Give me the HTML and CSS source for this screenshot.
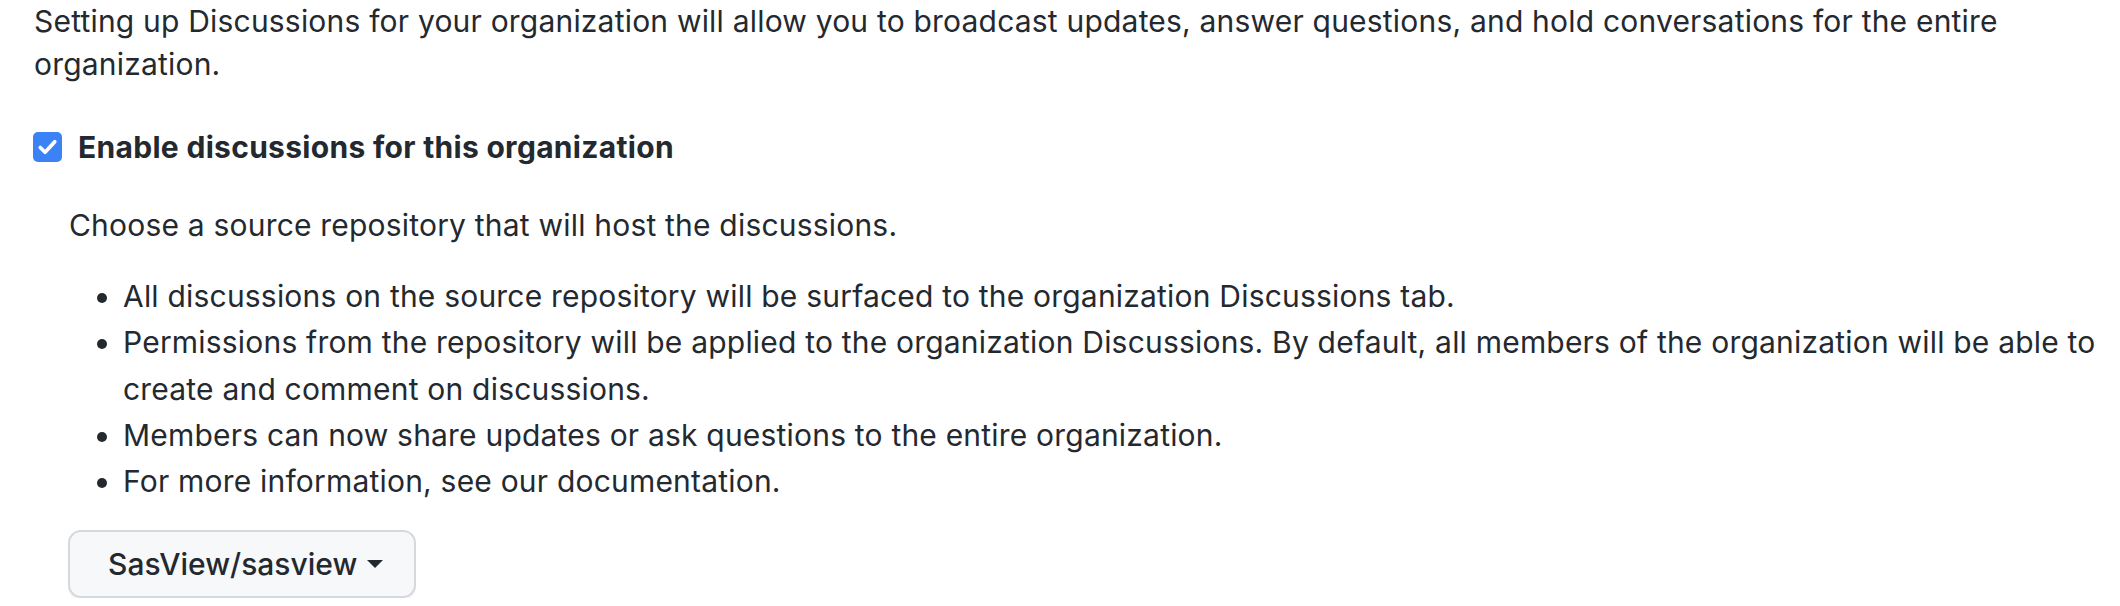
FILE: index.html
```html
<!DOCTYPE html>
<html lang="en">
<head>
<meta charset="utf-8">
<title>Discussions settings</title>
<link rel="stylesheet" href="styles.css">
</head>
<body>
<div class="settings">
  <p class="intro">Setting up Discussions for your organization will allow you to broadcast updates, answer questions, and hold conversations for the entire organization.</p>
  <label class="check-row">
    <span class="checkbox">
      <svg viewBox="0 0 30 30" width="30" height="30" aria-hidden="true"><path d="M7.5 15.5 L12.5 20.5 L22.5 9.5" fill="none" stroke="#fff" stroke-width="3.8" stroke-linecap="round" stroke-linejoin="round"/></svg>
    </span>
    <span class="check-label">Enable discussions for this organization</span>
  </label>
  <div class="details">
    <p class="choose">Choose a source repository that will host the discussions.</p>
    <ul class="points">
      <li>All discussions on the source repository will be surfaced to the organization Discussions tab.</li>
      <li>Permissions from the repository will be applied to the organization Discussions. By default, all members of the organization will be able to create and comment on discussions.</li>
      <li>Members can now share updates or ask questions to the entire organization.</li>
      <li>For more information, see our documentation.</li>
    </ul>
    <button class="repo-btn" type="button">SasView/sasview <span class="caret"></span></button>
  </div>
</div>
</body>
</html>
```
FILE: styles.css
```css
html, body {
  margin: 0;
  padding: 0;
  background: #ffffff;
}
body {
  font-family: Inter, "Noto Sans", "Liberation Sans", sans-serif;
  font-size: 30px;
  letter-spacing: 0.2px;
  color: #24292f;
}
.settings {
  padding: 0 20px 0 34px;
}
.intro {
  margin: 0;
  line-height: 43px;
}
.check-row {
  display: flex;
  align-items: center;
  margin-top: 37px;
  height: 46px;
}
.checkbox {
  width: 29px;
  height: 30px;
  border-radius: 5px;
  background: #3b82f6;
  display: flex;
  align-items: center;
  justify-content: center;
  flex: none;
  margin-left: -1px;
  margin-top: 2px;
}
.checkbox svg {
  display: block;
}
.check-label {
  margin-left: 16px;
  font-weight: 700;
  letter-spacing: 0.3px;
  line-height: 46px;
  padding-top: 2px;
}
.details {
  padding-left: 35px;
}
.choose {
  margin: 33px 0 0 0;
  line-height: 46px;
}
.points {
  margin: 25px 0 0 0;
  padding-left: 54px;
  line-height: 46.3px;
}
.repo-btn {
  margin-top: 26px;
  height: 68px;
  width: 348px;
  margin-left: -1px;
  display: flex;
  align-items: center;
  justify-content: flex-start;
  padding: 0 0 0 38px;
  font-family: Inter, "Noto Sans", "Liberation Sans", sans-serif;
  font-size: 30px;
  font-weight: 500;
  letter-spacing: 0;
  color: #24292f;
  background: #f6f8fa;
  border: 2px solid #d5d8dc;
  border-radius: 13px;
  box-shadow: 0 2px 0 rgba(27, 31, 36, 0.04);
}
.caret {
  display: inline-block;
  width: 0;
  height: 0;
  margin-left: 10px;
  border-left: 8px solid transparent;
  border-right: 8px solid transparent;
  border-top: 8px solid #24292f;
}
```
